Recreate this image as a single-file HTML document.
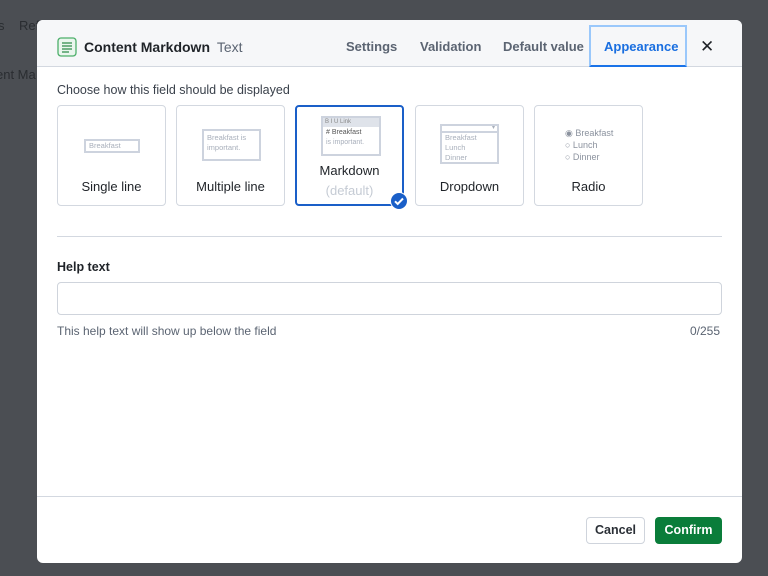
<!DOCTYPE html>
<html><head><style>
*{box-sizing:border-box;margin:0;padding:0}
body{width:768px;height:576px;background:#4b4e53;font-family:"Liberation Sans",sans-serif;position:relative;overflow:hidden}
.bgt{position:absolute;color:#2a2d31;font-size:13px}
.modal{position:absolute;left:37px;top:20px;width:705px;height:543px;background:#fff;border-radius:6px;overflow:hidden}
.hdr{position:absolute;left:0;top:0;width:705px;height:47px;background:#f6f7f9;border-bottom:1px solid #d3d8e0}
.abs{position:absolute}
.tab{position:absolute;top:19px;font-size:13px;color:#5b6472;font-weight:bold}
.card{position:absolute;top:85px;width:109px;height:101px;border:1px solid #d3d8e0;border-radius:4px;text-align:center}
.card .lbl{position:absolute;left:0;right:0;top:73px;font-size:13px;color:#1f2328}
.mini{position:absolute;border:2px solid #cdd3de;font-size:7.5px;color:#a8afbb;text-align:left;line-height:10px}
</style></head><body>
<div class="bgt" style="left:-2px;top:18px">s&nbsp;&nbsp;&nbsp;&nbsp;Ref</div>
<div class="bgt" style="left:-4px;top:67px">ent Ma</div>
<div class="modal">
 <div class="hdr">
  <svg class="abs" style="left:20px;top:17px" width="20" height="20" viewBox="0 0 20 20"><rect x="1" y="1" width="18" height="18" rx="3" fill="#eaf6ee" stroke="#4caf6a" stroke-width="1.3"/><path d="M5 6h10M5 9h10M5 12h10M5 15h7" stroke="#2e8b4a" stroke-width="1.3"/></svg>
  <div class="abs" style="left:47px;top:19px;font-size:14px;font-weight:bold;color:#1f2328">Content Markdown <span style="font-weight:normal;color:#5b6472;margin-left:3px">Text</span></div>
  <div class="tab" style="left:309px">Settings</div>
  <div class="tab" style="left:383px">Validation</div>
  <div class="tab" style="left:466px">Default value</div>
  <div class="abs" style="left:552px;top:5px;width:98px;height:42px;border:2px solid #9ac8fb;border-bottom:2px solid #1a73e8"></div>
  <div class="tab" style="left:567px;color:#1a6fe0">Appearance</div>
  <div class="abs" style="left:663px;top:17px;font-size:17px;color:#1f2328">✕</div>
 </div>
 <div class="abs" style="left:20px;top:63px;font-size:12.5px;color:#3a414b">Choose how this field should be displayed</div>
 <div class="card" style="left:20px"><div class="mini" style="left:26px;top:33px;width:56px;height:14px;padding-left:3px">Breakfast</div><div class="lbl">Single line</div></div>
 <div class="card" style="left:139px"><div class="mini" style="left:25px;top:23px;width:59px;height:32px;padding:2px 3px">Breakfast is<br>important.</div><div class="lbl">Multiple line</div></div>
 <div class="card" style="left:258px;border:2px solid #1a5fc8"><div class="mini" style="left:24px;top:9px;width:60px;height:40px;padding:0;font-size:6px;line-height:9px;color:#555"><div style="background:#dfe3ea;height:9px;padding-left:2px;color:#888">B I U Link</div><div style="padding:1px 3px;color:#555;font-size:7px">#&nbsp;Breakfast</div><div style="padding:0 3px;color:#a8afbb;font-size:7px">is important.</div></div><div class="lbl" style="top:56px">Markdown</div><div class="lbl" style="top:76px;color:#c5cbd4">(default)</div>
  <svg class="abs" style="left:93px;top:85px" width="18" height="18"><circle cx="9" cy="9" r="8.5" fill="#1a5fc8" stroke="#fff" stroke-width="1"/><path d="M5 9.3l2.7 2.7L13 6.5" stroke="#fff" stroke-width="2" fill="none"/></svg></div>
 <div class="card" style="left:378px"><div class="mini" style="left:24px;top:18px;width:59px;height:40px;padding:0"><div style="height:7px;border-bottom:2px solid #cdd3de;font-size:6px;text-align:right;padding-right:2px;line-height:5px">▾</div><div style="padding:0 3px">Breakfast<br>Lunch<br>Dinner</div></div><div class="lbl">Dropdown</div></div>
 <div class="card" style="left:497px"><div class="abs" style="left:30px;top:21px;font-size:9px;color:#8b929e;text-align:left;line-height:12px">◉ Breakfast<br>○ Lunch<br>○ Dinner</div><div class="lbl">Radio</div></div>
 <div class="abs" style="left:20px;top:216px;width:665px;height:1px;background:#d3d8e0"></div>
 <div class="abs" style="left:20px;top:240px;font-size:12.5px;font-weight:bold;color:#1f2328">Help text</div>
 <div class="abs" style="left:20px;top:262px;width:665px;height:33px;border:1px solid #cfd4dc;border-radius:4px"></div>
 <div class="abs" style="left:20px;top:304px;font-size:12px;color:#5b6472">This help text will show up below the field</div>
 <div class="abs" style="left:653px;top:304px;font-size:12px;color:#5b6472">0/255</div>
 <div class="abs" style="left:0;top:476px;width:705px;height:1px;background:#d3d8e0"></div>
 <div class="abs" style="left:549px;top:497px;width:59px;height:27px;border:1px solid #cfd4dc;border-radius:4px;font-size:12.5px;font-weight:bold;color:#2a2f36;text-align:center;line-height:25px">Cancel</div>
 <div class="abs" style="left:618px;top:497px;width:67px;height:27px;background:#0a7d3a;border-radius:4px;font-size:12.5px;font-weight:bold;color:#fff;text-align:center;line-height:27px">Confirm</div>
</div>
</body></html>
